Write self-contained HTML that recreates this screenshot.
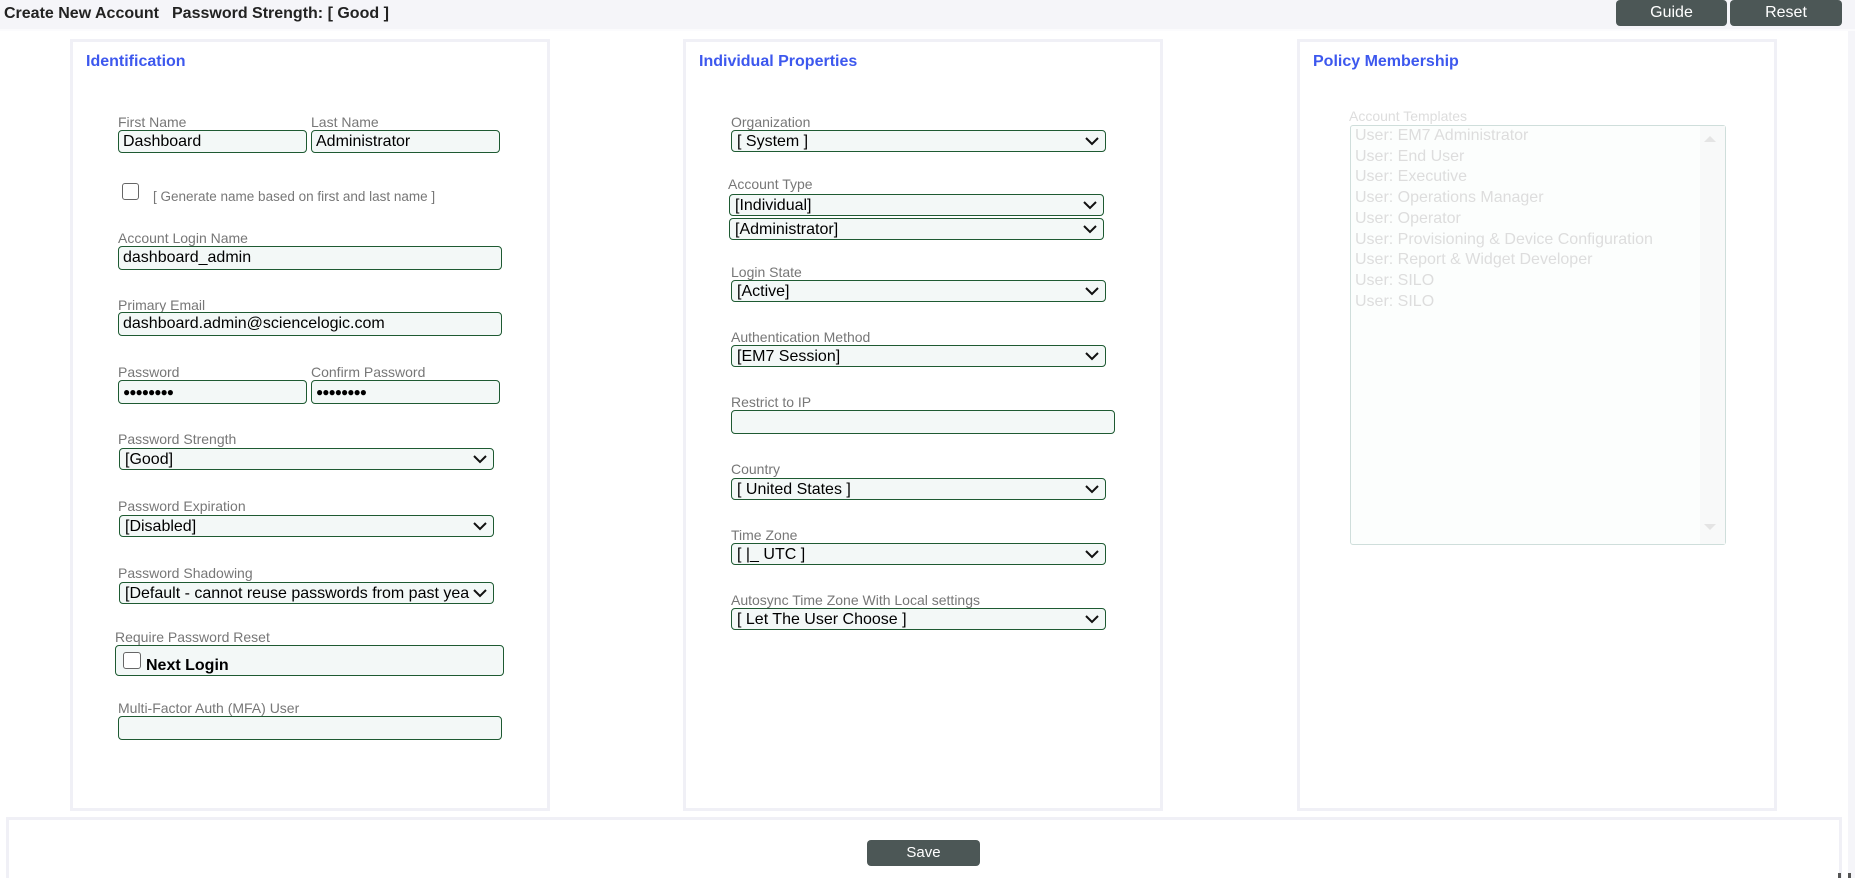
<!DOCTYPE html>
<html style="width:1855px;height:878px;overflow:hidden"><head><meta charset="utf-8"><style>
*{box-sizing:border-box;margin:0;padding:0}
body{width:1855px;height:878px;position:relative;background:#fff;font-family:"Liberation Sans",Arial,sans-serif;overflow:hidden}
.a{position:absolute}
.hdr{left:0;top:0;width:1855px;height:31px;background:#f5f5f9;border-bottom:2px solid #fbfbfd}
.t{font-weight:bold;font-size:16px;color:#222;top:5px}
.btn{background:#4c5756;color:#fff;font-size:16px;text-align:center;border-radius:4px;line-height:26px}
.pn{border:3px solid #f0f0f6}
.h{font-weight:bold;font-size:16px;color:#3d58ee}
.lb{font-size:14px;color:#777;line-height:16px}
.in{background:#f3f8f7;border:1.5px solid #1e5a32;border-radius:4px;font-size:16px;color:#000;padding-left:4px;padding-top:1px;line-height:20px;white-space:nowrap;overflow:hidden}
.sel{background:#f3f8f7;border:1.5px solid #1e5a32;border-radius:4px;font-size:16px;color:#000;padding-left:5px;padding-top:1px;line-height:19px;white-space:nowrap;overflow:hidden}
.sel svg{position:absolute;right:6px;top:5px}
.cb{border:1.5px solid #666;border-radius:3px;background:#fff}
.li{font-size:16px;color:#ddd;line-height:20.7px}
</style></head><body>
<div class="a hdr"></div>
<div class="a t" style="left:4px">Create New Account</div>
<div class="a t" style="left:172px">Password Strength: [ Good ]</div>
<div class="a btn" style="left:1616px;top:0;width:111px">Guide</div>
<div class="a btn" style="left:1730px;top:0;width:112px">Reset</div>
<div class="a" style="left:1848px;top:31px;width:7px;height:847px;background:#f5f5f9"></div>

<div class="a pn" style="left:70px;top:39px;width:480px;height:772px"></div>
<div class="a pn" style="left:683px;top:39px;width:480px;height:772px"></div>
<div class="a pn" style="left:1297px;top:39px;width:480px;height:772px"></div>
<div class="a pn" style="left:6px;top:817px;width:1836px;height:61px;border-bottom:0"></div>
<div class="a btn" style="left:867px;top:840px;width:113px;height:26px;font-size:15px">Save</div>
<div class="a" style="left:1838px;top:873px;width:3px;height:5px;background:#555"></div>
<div class="a" style="left:1848px;top:873px;width:3px;height:5px;background:#555"></div>

<div class="a h" style="left:86px;top:53px">Identification</div>
<div class="a h" style="left:699px;top:53px">Individual Properties</div>
<div class="a h" style="left:1313px;top:53px">Policy Membership</div>

<!-- panel 1 -->
<div class="a lb" style="left:118px;top:114px">First Name</div>
<div class="a in" style="left:118px;top:130px;width:189px;height:23px">Dashboard</div>
<div class="a lb" style="left:311px;top:114px">Last Name</div>
<div class="a in" style="left:311px;top:130px;width:189px;height:23px">Administrator</div>
<div class="a cb" style="left:122px;top:183px;width:17px;height:17px"></div>
<div class="a lb" style="left:153px;top:189px;font-size:13.5px">[ Generate name based on first and last name ]</div>
<div class="a lb" style="left:118px;top:230px">Account Login Name</div>
<div class="a in" style="left:118px;top:246px;width:384px;height:24px">dashboard_admin</div>
<div class="a lb" style="left:118px;top:297px">Primary Email</div>
<div class="a in" style="left:118px;top:312px;width:384px;height:24px">dashboard.admin@sciencelogic.com</div>
<div class="a lb" style="left:118px;top:364px">Password</div>
<div class="a in" style="left:118px;top:380px;width:189px;height:24px;font-size:12px;font-weight:bold;letter-spacing:-1px">●●●●●●●●</div>
<div class="a lb" style="left:311px;top:364px">Confirm Password</div>
<div class="a in" style="left:311px;top:380px;width:189px;height:24px;font-size:12px;font-weight:bold;letter-spacing:-1px">●●●●●●●●</div>
<div class="a lb" style="left:118px;top:431px">Password Strength</div>
<div class="a sel" style="left:119px;top:448px;width:375px;height:22px">[Good]<svg width="14" height="10"><polyline points="1,2 7,8 13,2" fill="none" stroke="#111" stroke-width="2"/></svg></div>
<div class="a lb" style="left:118px;top:498px">Password Expiration</div>
<div class="a sel" style="left:119px;top:515px;width:375px;height:22px">[Disabled]<svg width="14" height="10"><polyline points="1,2 7,8 13,2" fill="none" stroke="#111" stroke-width="2"/></svg></div>
<div class="a lb" style="left:118px;top:565px">Password Shadowing</div>
<div class="a sel" style="left:119px;top:582px;width:375px;height:22px;padding-right:28px">[Default - cannot reuse passwords from past yea<svg width="14" height="10" style="background:#f3f8f7"><polyline points="1,2 7,8 13,2" fill="none" stroke="#111" stroke-width="2"/></svg></div>
<div class="a lb" style="left:115px;top:629px">Require Password Reset</div>
<div class="a in" style="left:115px;top:645px;width:389px;height:31px"></div>
<div class="a cb" style="left:123px;top:652px;width:18px;height:17px"></div>
<div class="a" style="left:146px;top:657px;font-size:16px;font-weight:bold">Next Login</div>
<div class="a lb" style="left:118px;top:700px">Multi-Factor Auth (MFA) User</div>
<div class="a in" style="left:118px;top:716px;width:384px;height:24px"></div>

<!-- panel 2 -->
<div class="a lb" style="left:731px;top:114px">Organization</div>
<div class="a sel" style="left:731px;top:130px;width:375px;height:22px">[ System ]<svg width="14" height="10"><polyline points="1,2 7,8 13,2" fill="none" stroke="#111" stroke-width="2"/></svg></div>
<div class="a lb" style="left:728px;top:176px">Account Type</div>
<div class="a sel" style="left:729px;top:194px;width:375px;height:22px">[Individual]<svg width="14" height="10"><polyline points="1,2 7,8 13,2" fill="none" stroke="#111" stroke-width="2"/></svg></div>
<div class="a sel" style="left:729px;top:218px;width:375px;height:22px">[Administrator]<svg width="14" height="10"><polyline points="1,2 7,8 13,2" fill="none" stroke="#111" stroke-width="2"/></svg></div>
<div class="a lb" style="left:731px;top:264px">Login State</div>
<div class="a sel" style="left:731px;top:280px;width:375px;height:22px">[Active]<svg width="14" height="10"><polyline points="1,2 7,8 13,2" fill="none" stroke="#111" stroke-width="2"/></svg></div>
<div class="a lb" style="left:731px;top:329px">Authentication Method</div>
<div class="a sel" style="left:731px;top:345px;width:375px;height:22px">[EM7 Session]<svg width="14" height="10"><polyline points="1,2 7,8 13,2" fill="none" stroke="#111" stroke-width="2"/></svg></div>
<div class="a lb" style="left:731px;top:394px">Restrict to IP</div>
<div class="a in" style="left:731px;top:410px;width:384px;height:24px"></div>
<div class="a lb" style="left:731px;top:461px">Country</div>
<div class="a sel" style="left:731px;top:478px;width:375px;height:22px">[ United States ]<svg width="14" height="10"><polyline points="1,2 7,8 13,2" fill="none" stroke="#111" stroke-width="2"/></svg></div>
<div class="a lb" style="left:731px;top:527px">Time Zone</div>
<div class="a sel" style="left:731px;top:543px;width:375px;height:22px">[ |_ UTC ]<svg width="14" height="10"><polyline points="1,2 7,8 13,2" fill="none" stroke="#111" stroke-width="2"/></svg></div>
<div class="a lb" style="left:731px;top:592px">Autosync Time Zone With Local settings</div>
<div class="a sel" style="left:731px;top:608px;width:375px;height:22px">[ Let The User Choose ]<svg width="14" height="10"><polyline points="1,2 7,8 13,2" fill="none" stroke="#111" stroke-width="2"/></svg></div>

<!-- panel 3 -->
<div class="a lb" style="left:1349px;top:108px;color:#ddd">Account Templates</div>
<div class="a" style="left:1350px;top:125px;width:376px;height:420px;border:1.5px solid #cfdedb;border-radius:3px;background:#fcfefd;padding:0 0 0 4px">
<div class="a" style="right:0;top:0;width:25px;height:100%;background:#f8f9f9"></div>
<div class="a" style="right:9px;top:10px;width:0;height:0;border-left:6px solid transparent;border-right:6px solid transparent;border-bottom:6px solid #e4e4e4"></div>
<div class="a" style="right:9px;bottom:14px;width:0;height:0;border-left:6px solid transparent;border-right:6px solid transparent;border-top:6px solid #e4e4e4"></div>
<div class="li">User: EM7 Administrator</div>
<div class="li">User: End User</div>
<div class="li">User: Executive</div>
<div class="li">User: Operations Manager</div>
<div class="li">User: Operator</div>
<div class="li">User: Provisioning &amp; Device Configuration</div>
<div class="li">User: Report &amp; Widget Developer</div>
<div class="li">User: SILO</div>
<div class="li">User: SILO</div>
</div>
</body></html>
